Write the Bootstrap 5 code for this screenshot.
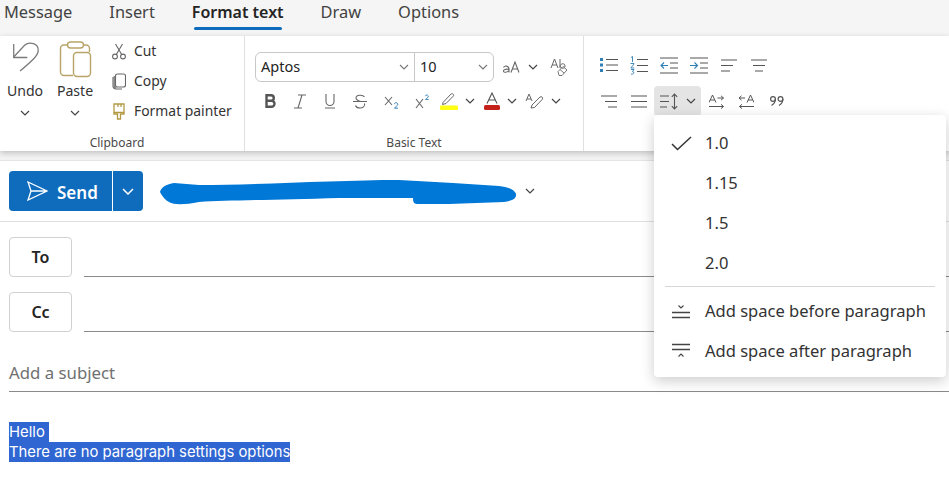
<!DOCTYPE html>
<html lang="en">
<head>
<meta charset="utf-8">
<title>Format text</title>
<link href="https://cdn.jsdelivr.net/npm/bootstrap@5.3.0/dist/css/bootstrap.min.css" rel="stylesheet">
<style>
html,body{height:486px;overflow:hidden}
body{font-family:"Noto Sans","Open Sans",sans-serif;color:#242424;background:#fff;width:949px}
svg{display:block;flex:none}
.tabs{height:36px;background:#f5f5f5;padding-left:4px;gap:37px;font-size:16.4px;line-height:24px;color:#424242}
.tab-on{font-weight:600;color:#242424;position:relative;font-size:16px}
.tab-on::after{content:"";position:absolute;left:2px;right:2px;top:27px;height:3px;border-radius:2px;background:#0f6cbd}
.ribbon{height:115px;background:#fff;box-shadow:0 2px 6px rgba(0,0,0,.22);position:relative;z-index:1}
.grp{position:relative;height:115px;border-right:1px solid #e0e0e0}
.grp-a{width:245px}.grp-b{width:339px;padding-left:10px}.grp-c{flex:1;padding-left:10px;border-right:0}
.grp-name{position:absolute;left:0;right:0;bottom:0;text-align:center;font-size:12px;line-height:16px;color:#4a4a4a}
.name-a{right:10px}
.big{width:50px;font-size:14.1px;line-height:20px;text-align:center;color:#333;padding-top:5px}
.icon-top{height:40px}
.chev-row{height:24px}
.mini{margin-left:12px}
.mini-row{height:30px;font-size:13.9px;color:#333;gap:8px}
.combo{width:239px;height:30px;border:1px solid #c8c8c8;border-radius:6px;font-size:14.5px;color:#242424}
.cb-font{width:159px;border-right:1px solid #c8c8c8;padding:0 5px}
.cb-size{flex:1;padding:0 5px}
.slot{height:30px;flex:none}
.w14{width:14px}.w16{width:16px}.w18{width:18px}.w24{width:24px}.w26{width:26px}.w30{width:30px}.w32{width:32px}.w42{width:42px}
.up-a{margin-top:16px}.up-b{margin-top:4px}.up-c{margin-top:14px}.up-d{margin-top:6px}
.sp-btn{width:47px;height:30px;background:#e4e4e4;border-radius:4px;position:relative;margin-right:7px;padding-left:6px;gap:4px}
.band{height:10px;background:#f3f3f3;border-bottom:1px solid #e4e4e4}
.send-row{height:61px;border-bottom:1px solid #e0e0e0;padding-left:9px}
.send{width:134px;height:40px;background:#0f6cbd;color:#fff;border-radius:4px;font-weight:600;font-size:17px}
.send-main{width:104px;padding-left:18px;gap:9px;border-right:1px solid #fff;height:40px}
.send-label{padding-top:3px}
.send-arr{flex:1}
.blot{margin-left:16px;margin-top:4px}
.to-row{padding-left:9px;gap:12px;height:55px;padding-top:15px}
.to-btn{width:63px;height:40px;border:1px solid #d1d1d1;border-radius:4px;font-size:16px;font-weight:600;color:#242424;background:#fff;padding:0}
.to-line{flex:1;height:40px;border-bottom:1px solid #8a8a8a}
.subj{margin-top:15px;margin-left:9px;height:45px;border-bottom:1px solid #8a8a8a;font-size:16.8px;color:#707070;line-height:22px;padding-top:15px}
.sel{margin-top:30px;padding-left:9px;font-family:Inter,"Noto Sans",sans-serif;font-size:14.85px;line-height:20px;color:#fff}
.sel span{background:#2f66d2;display:inline-block}
.line-menu{display:block;top:29px;left:0;width:292px;padding:8px 0 6px;border:0;border-radius:4px;margin:0;box-shadow:0 4px 14px rgba(0,0,0,.2);font-size:16.55px;z-index:5}
.line-menu .dropdown-item{height:40px;padding:0;color:#333;display:flex;align-items:center}
.ck{width:51px;display:flex;justify-content:center;padding-left:3px;flex:none}
.line-menu .dropdown-divider{margin:3px 11px 4px;border-color:#d6d6d6;opacity:1}
</style>
</head>
<body>
<div class="tabs d-flex align-items-start">
  <div>Message</div><div>Insert</div><div class="tab-on">Format text</div><div>Draw</div><div>Options</div>
</div>

<div class="ribbon d-flex">
  <!-- Clipboard -->
  <div class="grp grp-a d-flex">
    <div class="big">
      <div class="icon-top d-flex justify-content-center">
        <svg width="29" height="33" viewBox="0 0 32 36" fill="none" stroke="#7a7a7a" stroke-width="1.400"><path d="M3 3V18H18"/><path d="M3 17.500L15 4.500C20 0 31 2 30 11C29.500 16 24 21 10 33"/></svg>
      </div>
      <div class="lbl-row">Undo</div>
      <div class="chev-row d-flex justify-content-center align-items-center"><svg width="10" height="6" viewBox="0 0 10 6" fill="none" stroke="#444" stroke-width="1.2"><path d="M1 1l4 4 4-4"/></svg></div>
    </div>
    <div class="big">
      <div class="icon-top d-flex justify-content-center">
        <svg width="33" height="37" viewBox="0 0 33 37" fill="none" stroke="#b9a468" stroke-width="1.4"><path d="M9 4H5a3.500 3.500 0 0 0-3.500 3.500V31A3.500 3.500 0 0 0 5 34.500h9"/><path d="M24 4h3a3.500 3.500 0 0 1 3.500 3.500V11"/><rect x="8.500" y="1" width="16" height="6" rx="3"/><rect x="14.500" y="11.500" width="17" height="24" rx="3.500"/></svg>
      </div>
      <div class="lbl-row">Paste</div>
      <div class="chev-row d-flex justify-content-center align-items-center"><svg width="10" height="6" viewBox="0 0 10 6" fill="none" stroke="#444" stroke-width="1.2"><path d="M1 1l4 4 4-4"/></svg></div>
    </div>
    <div class="mini">
      <div class="mini-row d-flex align-items-center">
        <svg width="14" height="17" viewBox="0 0 14 17" fill="none" stroke="#666" stroke-width="1.1"><circle cx="3" cy="13.500" r="2.400"/><circle cx="11" cy="13.500" r="2.400"/><path d="M4.300 11.500L10.500 1M9.700 11.500L3.500 1"/></svg>
        <span>Cut</span>
      </div>
      <div class="mini-row d-flex align-items-center">
        <svg width="14" height="17" viewBox="0 0 14 17" fill="none" stroke="#666" stroke-width="1.1"><rect x="3.500" y="1" width="10" height="13" rx="2"/><path d="M1 4v9.500A3 3 0 0 0 4 16h6"/><path d="M2.200 3v10a2 2 0 0 0 2 2"/></svg>
        <span>Copy</span>
      </div>
      <div class="mini-row d-flex align-items-center">
        <svg width="14" height="17" viewBox="0 0 14 17" fill="none" stroke="#b29a45" stroke-width="1.3"><path d="M3 1h9v8.500H2V1z"/><path d="M2 9.500v1.500h3.500v5h3v-5H12V9.500"/><path d="M6 1v3M9 1v3"/></svg>
        <span>Format painter</span>
      </div>
    </div>
    <div class="grp-name name-a">Clipboard</div>
  </div>

  <!-- Basic text -->
  <div class="grp grp-b">
    <div class="d-flex align-items-center up-a">
      <div class="combo d-flex">
        <div class="cb-font d-flex align-items-center justify-content-between"><span>Aptos</span><svg width="10" height="6" viewBox="0 0 10 6" fill="none" stroke="#777" stroke-width="1.1"><path d="M1 1l4 4 4-4"/></svg></div>
        <div class="cb-size d-flex align-items-center justify-content-between"><span>10</span><svg width="10" height="6" viewBox="0 0 10 6" fill="none" stroke="#777" stroke-width="1.1"><path d="M1 1l4 4 4-4"/></svg></div>
      </div>
      <div class="slot w26 d-flex align-items-center justify-content-end"><svg width="18" height="12" viewBox="0 0 18 12" fill="none" stroke="#666" stroke-width="1.1"><path d="M1.500 6.500a3 3 0 0 1 5.500 1V11.500M7 8.500c-3-1-6 .3-5.500 1.800.5 1.400 4 1.200 5.500-.8"/><path d="M9 11.500L13 1l4 10.500M10.500 8h5"/></svg></div>
      <div class="slot w18 d-flex align-items-center justify-content-end"><svg width="10" height="6" viewBox="0 0 10 6" fill="none" stroke="#444" stroke-width="1.2"><path d="M1 1l4 4 4-4"/></svg></div>
      <div class="slot w42 d-flex align-items-center justify-content-center"><svg width="18" height="18" viewBox="0 0 18 18" fill="none" stroke="#666" stroke-width="1"><path d="M1 10L4.500 1 8 10M2.200 7h4.600M10 1v9M10 8c1-3 5-3 5 0s-4 3-5 0"/><path d="M8 13.500l5-5 4 3.500-5 5.500h-3zM10 11.500l4 3.500" stroke="#777"/></svg></div>
    </div>
    <div class="d-flex align-items-center up-b">
      <div class="slot w30 d-flex align-items-center justify-content-center"><svg width="11" height="14" viewBox="0 0 11 14" fill="none" stroke="#555" stroke-width="2.400"><path d="M1.500 1.200h4.500a2.800 2.800 0 0 1 0 5.600H1.500zM1.500 6.800h5a3 3 0 0 1 0 6h-5zM1.500 0v14"/></svg></div>
      <div class="slot w30 d-flex align-items-center justify-content-center"><svg width="14" height="15" viewBox="0 0 14 15" fill="none" stroke="#666" stroke-width="1.100"><path d="M5 1h8M1 14h8M9 1L5 14"/></svg></div>
      <div class="slot w30 d-flex align-items-center justify-content-center"><svg width="12" height="16" viewBox="0 0 12 16" fill="none" stroke="#666" stroke-width="1.100"><path d="M2 1v7.500a4 4 0 0 0 8 0V1M1 15h10"/></svg></div>
      <div class="slot w30 d-flex align-items-center justify-content-center"><svg width="14" height="15" viewBox="0 0 14 15" fill="none" stroke="#666" stroke-width="1.100"><path d="M11.500 3C10 .5 3 .5 3 4c0 2 3 3 4.500 3.500M0 7.500h14M11.500 9.500c1 3-2 4.500-4.500 4.500s-4-1-4.500-2.500"/></svg></div>
      <div class="slot w32 d-flex align-items-center justify-content-center"><svg width="15" height="15" viewBox="0 0 15 15" fill="none"><path d="M1 3l7 8M8 3l-7 8" stroke="#666" stroke-width="1.100"/><path d="M10.500 10.200a1.600 1.600 0 1 1 2.700 1.200l-2.700 2.800h3.500" stroke="#3b82b8"/></svg></div>
      <div class="slot w30 d-flex align-items-center justify-content-center"><svg width="15" height="15" viewBox="0 0 15 15" fill="none"><path d="M1 5l7 9M8 5l-7 9" stroke="#666" stroke-width="1.100"/><path d="M10.500 2.200a1.400 1.400 0 1 1 2.500 1l-2.500 2.300h3.200" stroke="#3b82b8" stroke-width=".9"/></svg></div>
      <div class="slot w24 d-flex align-items-center justify-content-center"><svg width="18" height="18" viewBox="0 0 18 18" fill="none"><path d="M3 10.500L11 2c1.500-1.200 3.500.8 2.200 2.200L6 11.500 2.500 12.500z" stroke="#666" stroke-width="1"/><rect y="13.500" width="18" height="4.500" rx="1" fill="#ffff14"/></svg></div>
      <div class="slot w18 d-flex align-items-center justify-content-center"><svg width="10" height="6" viewBox="0 0 10 6" fill="none" stroke="#444" stroke-width="1.2"><path d="M1 1l4 4 4-4"/></svg></div>
      <div class="slot w26 d-flex align-items-center justify-content-center"><svg width="16" height="18" viewBox="0 0 16 18" fill="none"><path d="M3 11.500L8 1l5 10.500M4.500 8h7" stroke="#555" stroke-width="1.100"/><rect y="13" width="16" height="5" rx="1.500" fill="#c4211b"/></svg></div>
      <div class="slot w14 d-flex align-items-center justify-content-center"><svg width="10" height="6" viewBox="0 0 10 6" fill="none" stroke="#444" stroke-width="1.2"><path d="M1 1l4 4 4-4"/></svg></div>
      <div class="slot w30 d-flex align-items-center justify-content-center"><svg width="19" height="17" viewBox="0 0 19 17" fill="none" stroke="#666" stroke-width="1"><path d="M1 8L4 1l3 7M2 6h4"/><path d="M6 15l1-3 8-8c1.500-1.200 3.500.8 2.300 2.300L9.500 14.500z"/></svg></div>
      <div class="slot w14 d-flex align-items-center justify-content-center"><svg width="10" height="6" viewBox="0 0 10 6" fill="none" stroke="#444" stroke-width="1.2"><path d="M1 1l4 4 4-4"/></svg></div>
    </div>
    <div class="grp-name">Basic Text</div>
  </div>

  <!-- Paragraph -->
  <div class="grp grp-c">
    <div class="d-flex align-items-center up-c">
      <div class="slot w30 d-flex align-items-center justify-content-center"><svg width="18" height="18" viewBox="0 0 18 18" fill="none"><path d="M0 2h3v3H0zM0 7.500h3v3H0zM0 13h3v3H0z" fill="#2f7fb5"/><path d="M6 3.500h12M6 9h12M6 14.500h12" stroke="#555" stroke-width="1.100"/></svg></div>
      <div class="slot w30 d-flex align-items-center justify-content-center"><svg width="18" height="19" viewBox="0 0 18 19" fill="none"><path d="M7 3.500h11M7 9.500h11M7 15.500h11" stroke="#555" stroke-width="1.100"/><path d="M1 1.500l1.500-1V6M.5 7.500h3.500v.5L.8 12h3.400M1 13.500h3l-1.500 2c2-.2 2 3-1.500 2.700" stroke="#2f7fb5" stroke-width=".9"/></svg></div>
      <div class="slot w30 d-flex align-items-center justify-content-center"><svg width="18" height="17" viewBox="0 0 18 17" fill="none"><path d="M0 1h18M0 16h18M10 6h8M10 11h8" stroke="#555" stroke-width="1.100"/><path d="M8 8.500H1M4 5.500L1 8.500l3 3" stroke="#2f7fb5" stroke-width="1.100"/></svg></div>
      <div class="slot w30 d-flex align-items-center justify-content-center"><svg width="18" height="17" viewBox="0 0 18 17" fill="none"><path d="M0 1h18M0 16h18M10 6h8M10 11h8" stroke="#555" stroke-width="1.100"/><path d="M0 8.500h7M4.500 5.500l3 3-3 3" stroke="#2f7fb5" stroke-width="1.100"/></svg></div>
      <div class="slot w30 d-flex align-items-center justify-content-center"><svg width="16" height="13" viewBox="0 0 16 13" fill="none" stroke="#555" stroke-width="1.100"><path d="M0 1h16M0 6.500h12M0 12h9"/></svg></div>
      <div class="slot w30 d-flex align-items-center justify-content-center"><svg width="16" height="13" viewBox="0 0 16 13" fill="none" stroke="#555" stroke-width="1.100"><path d="M0 1h16M2 6.500h12M4 12h8"/></svg></div>
    </div>
    <div class="d-flex align-items-center up-d">
      <div class="slot w30 d-flex align-items-center justify-content-center"><svg width="16" height="13" viewBox="0 0 16 13" fill="none" stroke="#555" stroke-width="1.100"><path d="M0 1h16M4 6.500h12M7 12h9"/></svg></div>
      <div class="slot w30 d-flex align-items-center justify-content-center"><svg width="16" height="13" viewBox="0 0 16 13" fill="none" stroke="#555" stroke-width="1.100"><path d="M0 1h16M0 6.500h16M0 12h16"/></svg></div>
      <div class="sp-btn d-flex align-items-center">
        <svg width="18" height="17" viewBox="0 0 18 17" fill="none" stroke="#555" stroke-width="1.100"><path d="M0 3h9M0 8.500h9M0 14h7M14.500 1v15M11.800 3.800l2.700-2.800 2.700 2.800M11.800 13.200l2.700 2.800 2.700-2.800"/></svg>
        <svg class="ms-1" width="10" height="6" viewBox="0 0 10 6" fill="none" stroke="#444" stroke-width="1.2"><path d="M1 1l4 4 4-4"/></svg>
        <ul class="dropdown-menu line-menu position-absolute list-unstyled">
          <li><a class="dropdown-item" href="#"><span class="ck"><svg width="21" height="15" viewBox="0 0 21 15" fill="none" stroke="#333" stroke-width="1.500"><path d="M1 8l5.500 5.500L20 1"/></svg></span>1.0</a></li>
          <li><a class="dropdown-item" href="#"><span class="ck"></span>1.15</a></li>
          <li><a class="dropdown-item" href="#"><span class="ck"></span>1.5</a></li>
          <li><a class="dropdown-item" href="#"><span class="ck"></span>2.0</a></li>
          <li><hr class="dropdown-divider"></li>
          <li><a class="dropdown-item" href="#"><span class="ck"><svg width="18" height="16" viewBox="0 0 18 16" fill="none" stroke="#444" stroke-width="1.300"><path d="M0 9.500h18M0 14.500h18"/><path d="M6.500 2.500L9 5l2.500-2.500" stroke-width="1.100"/></svg></span>Add space before paragraph</a></li>
          <li><a class="dropdown-item" href="#"><span class="ck"><svg width="18" height="16" viewBox="0 0 18 16" fill="none" stroke="#444" stroke-width="1.300"><path d="M0 1.500h18M0 6.500h18"/><path d="M6.500 13.500L9 11l2.500 2.500" stroke-width="1.100"/></svg></span>Add space after paragraph</a></li>
        </ul>
      </div>
      <div class="slot w16 d-flex align-items-center justify-content-center"><svg width="15" height="15" viewBox="0 0 15 15" fill="none" stroke="#555" stroke-width="1"><path d="M0 8.500L3.500 1 7 8.500M1.200 6h4.600M8.500 4h6M12 1.800l2.500 2.200-2.500 2.200M0 12.500h14.500M12 10.300l2.500 2.200-2.500 2.200"/></svg></div>
      <div class="slot w14"></div>
      <div class="slot w16 d-flex align-items-center justify-content-center"><svg width="15" height="15" viewBox="0 0 15 15" fill="none" stroke="#555" stroke-width="1"><path d="M8 8.500L11.500 1 15 8.500M9.200 6h4.600M0 4h6M2.500 1.800L0 4l2.500 2.200M.5 12.500H15M3 10.300L.5 12.500 3 14.700"/></svg></div>
      <div class="slot w14"></div>
      <div class="slot w18 d-flex align-items-center justify-content-center"><svg width="14" height="10" viewBox="0 0 14 10" fill="none" stroke="#555" stroke-width="1.200"><circle cx="3" cy="3" r="2.400"/><path d="M5.400 3C5.400 6 4 8 1.500 9.500"/><circle cx="10.500" cy="3" r="2.400"/><path d="M12.900 3c0 3-1.400 5-3.900 6.500"/></svg></div>
    </div>
  </div>
</div>

<div class="band"></div>

<div class="send-row d-flex align-items-center">
  <div class="send d-flex">
    <div class="send-main d-flex align-items-center">
      <svg width="21" height="20" viewBox="0 0 21 20" fill="none" stroke="#fff" stroke-width="1.300"><path d="M1 1l19 9-19 9 3-9zM4 10h16"/></svg>
      <span class="send-label">Send</span>
    </div>
    <div class="send-arr d-flex align-items-center justify-content-center"><svg width="12" height="7" viewBox="0 0 12 7" fill="none" stroke="#fff" stroke-width="1.500"><path d="M1 1l5 5 5-5"/></svg></div>
  </div>
  <svg class="blot" width="358" height="26" viewBox="0 0 358 26"><path d="M1 12C2 7 8 4 15 3L40 5C100 5 180 0 240 0L294 3 340 6C350 7 356 10 357 14 358 19 352 21 345 22L290 24 258 24C254 24 254 20 254 18L180 18C120 20 70 20 40 22 25 25 15 25 10 22 6 20 3 16 1 12Z" fill="#0078d7"/></svg>
  <svg class="ms-2" width="10" height="6" viewBox="0 0 10 6" fill="none" stroke="#444" stroke-width="1.200"><path d="M1 1l4 4 4-4"/></svg>
</div>

<div class="to-row d-flex align-items-start">
  <button class="btn to-btn" type="button">To</button><div class="to-line"></div>
</div>
<div class="to-row d-flex align-items-start">
  <button class="btn to-btn" type="button">Cc</button><div class="to-line"></div>
</div>
<div class="subj">Add a subject</div>
<div class="sel">
  <div><span>Hello&nbsp;</span></div>
  <div><span>There are no paragraph settings options</span></div>
</div>
</body>
</html>
